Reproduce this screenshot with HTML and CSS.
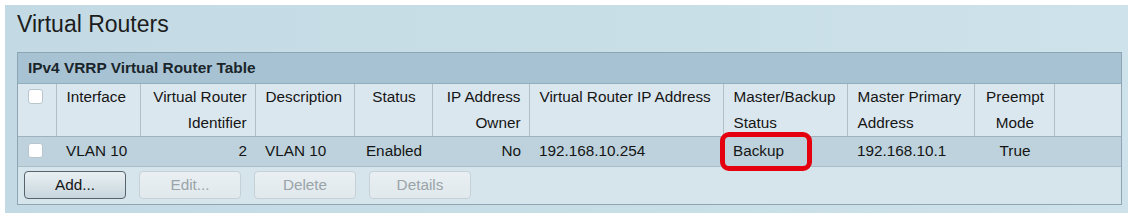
FILE: index.html
```html
<!DOCTYPE html>
<html>
<head>
    <title>Virtual Routers</title>
    <link rel="stylesheet" href="styles.css">
</head>
<body>
    <div class="panel">
        <h1>Virtual Routers</h1>

        <!-- VRRP table -->
        <div class="table-box">
            <div class="table-title">IPv4 VRRP Virtual Router Table</div>
            <table>
                <colgroup>
                    <col style="width: 38px">
                    <col style="width: 84px">
                    <col style="width: 115px">
                    <col style="width: 99px">
                    <col style="width: 78px">
                    <col style="width: 97px">
                    <col style="width: 194px">
                    <col style="width: 124px">
                    <col style="width: 127px">
                    <col style="width: 80px">
                    <col>
                </colgroup>
                <thead>
                    <tr>
                        <th><span class="check"></span></th>
                        <th>Interface</th>
                        <th class="right">Virtual Router Identifier</th>
                        <th>Description</th>
                        <th class="center">Status</th>
                        <th class="right">IP Address Owner</th>
                        <th>Virtual Router IP Address</th>
                        <th>Master/Backup Status</th>
                        <th>Master Primary Address</th>
                        <th class="center">Preempt Mode</th>
                        <th></th>
                    </tr>
                </thead>
                <tbody>
                    <tr>
                        <td><span class="check"></span></td>
                        <td>VLAN 10</td>
                        <td class="right">2</td>
                        <td>VLAN 10</td>
                        <td class="center">Enabled</td>
                        <td class="right">No</td>
                        <td>192.168.10.254</td>
                        <td class="marked">Backup<span class="highlight"></span></td>
                        <td>192.168.10.1</td>
                        <td class="center">True</td>
                        <td></td>
                    </tr>
                </tbody>
            </table>
            <div class="buttons">
                <button type="button">Add...</button>
                <button type="button" disabled>Edit...</button>
                <button type="button" disabled>Delete</button>
                <button type="button" disabled>Details</button>
            </div>
        </div>
    </div>
</body>
</html>
```

FILE: styles.css
```css
body {
    margin: 0;
    padding: 0;
    background-color: #fff;
    font-family: "Liberation Sans", Arial, Helvetica, sans-serif;
    color: #151515;
}

.panel {
    margin: 5px 9px 7px 5px;
    padding: 6px 6px 8px 12px;
    background: linear-gradient(to right, #c3dae4, #cde2ea);
}

h1 {
    margin: 0 0 15px 0;
    font-size: 23px;
    line-height: 26px;
    font-weight: normal;
    color: #1c1c1c;
}

.table-box {
    border: 1px solid #8ea6b3;
}

.table-title {
    height: 30px;
    line-height: 30px;
    padding-left: 10px;
    background-color: #a7c3d3;
    border-bottom: 1px solid #93aebe;
    font-size: 15.4px;
    font-weight: bold;
    color: #1a252b;
}

table {
    width: 100%;
    border-collapse: collapse;
    table-layout: fixed;
    font-size: 15.3px;
}

th, td {
    padding: 0 8px 0 10px;
    line-height: 26px;
    text-align: left;
}

th {
    font-weight: normal;
    vertical-align: top;
    background-color: #dbe7ee;
    border-left: 1px solid #f4f8fa;
    border-right: 1px solid #aebfc8;
    border-bottom: 1px solid #9db2be;
}

th:first-child {
    border-left: none;
}

th:last-child {
    border-right: none;
}

td {
    padding-top: 1px;
    padding-bottom: 2px;
    background-color: #bdd2dc;
    border-bottom: 1px solid #a9bfca;
}

.right {
    text-align: right;
}

.center {
    text-align: center;
}

.check {
    display: inline-block;
    width: 13px;
    height: 13px;
    vertical-align: -2px;
    background-color: #fff;
    border: 1px solid #b9c6cd;
    border-radius: 3px;
}

/* Red annotation around the Backup status */
.marked {
    position: relative;
}

.highlight {
    position: absolute;
    left: -3px;
    top: -5px;
    width: 82px;
    height: 29px;
    border: 5px solid #e4000f;
    border-radius: 9px;
}

.buttons {
    display: flex;
    gap: 13px;
    padding: 4px 6px 5px 6px;
    background-color: #d6e4eb;
}

.buttons button {
    width: 102px;
    height: 28px;
    padding: 0;
    font-family: "Liberation Sans", Arial, Helvetica, sans-serif;
    font-size: 15.3px;
    color: #151515;
    background: linear-gradient(#e9f0f3, #c8d6dd);
    border: 1px solid #56636b;
    border-radius: 4px;
}

.buttons button:disabled {
    color: #9aa4a9;
    background: linear-gradient(#e9eff2, #e1e9ed);
    border: 1px solid #c6d1d7;
}
```
